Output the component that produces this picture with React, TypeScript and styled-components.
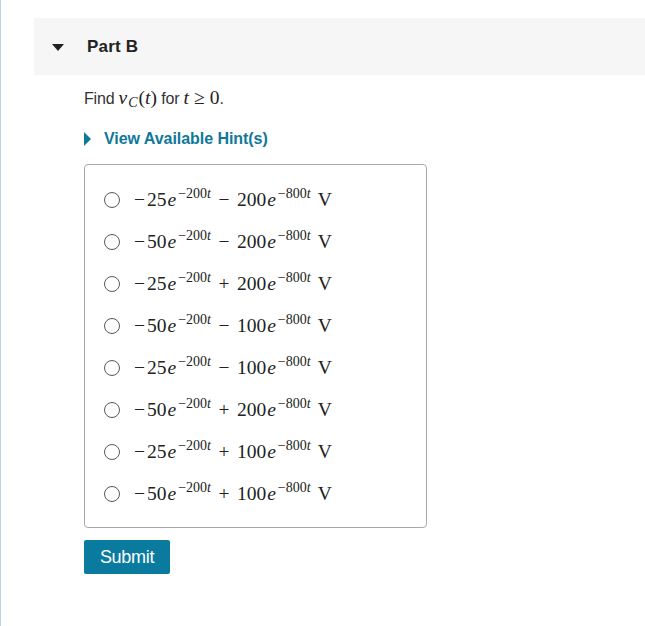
import React from "react";
import styled, { createGlobalStyle } from "styled-components";

const Global = createGlobalStyle`
  html, body { margin: 0; padding: 0; background: #fff; }
  body { font-family: "Liberation Sans", Arial, sans-serif; color: #333; }
`;

const Page = styled.div`
  min-height: 626px;
  box-sizing: border-box;
  border-left: 1px solid #c3cfdd;
  padding: 18px 0 0 33px;
`;

const Header = styled.div`
  height: 57px;
  background: #f6f6f6;
  display: flex;
  align-items: center;
  padding-left: 18px;
  gap: 23px;
`;

const DownTri = styled.span`
  width: 0;
  height: 0;
  border-left: 6px solid transparent;
  border-right: 6px solid transparent;
  border-top: 7px solid #222;
  margin-top: 1px;
`;

const Title = styled.h2`
  margin: 0;
  font-size: 17px;
  font-weight: 700;
  color: #222;
  letter-spacing: 0.2px;
`;

const Body = styled.div`
  padding-left: 50px;
`;

const Prompt = styled.p`
  margin: 13px 0 0;
  font-size: 16px;
  line-height: 20px;
  color: #333;
  letter-spacing: -0.2px;
  white-space: nowrap;
`;

const M = styled.span<{ $i?: boolean; $gap?: number }>`
  font-family: "Liberation Serif", "Times New Roman", serif;
  font-style: ${(p) => (p.$i ? "italic" : "normal")};
  font-size: 19.5px;
  color: #222;
  letter-spacing: 0;
  margin: 0 ${(p) => p.$gap ?? 0}px;
`;

const Sub = styled.span`
  font-family: "Liberation Serif", serif;
  font-style: italic;
  font-size: 14px;
  vertical-align: -3px;
  color: #222;
  margin: 0 1px 0 1px;
  letter-spacing: 0;
`;

const Hint = styled.div`
  margin-top: 16px;
  display: flex;
  align-items: center;
  gap: 13px;
  height: 20px;
  color: #0e7899;
  font-size: 16px;
  font-weight: 700;
  letter-spacing: -0.05px;
`;

const RightTri = styled.span`
  width: 0;
  height: 0;
  border-top: 7px solid transparent;
  border-bottom: 7px solid transparent;
  border-left: 7px solid #0e7899;
`;

const Box = styled.div`
  margin-top: 15px;
  width: 343px;
  box-sizing: border-box;
  border: 1px solid #a9a9a9;
  border-radius: 4px;
  padding: 14px 0 12px 19px;
`;

const Row = styled.label`
  height: 42px;
  display: flex;
  align-items: center;
  gap: 14px;
`;

const Radio = styled.span`
  width: 16px;
  height: 16px;
  box-sizing: border-box;
  border: 1.3px solid #595959;
  border-radius: 50%;
  flex: none;
`;

const Expr = styled.span`
  font-family: "Liberation Serif", "Times New Roman", serif;
  font-size: 19.5px;
  color: #222;
  white-space: nowrap;
  display: inline-flex;
  align-items: baseline;
`;

const Neg = styled.span`
  margin-right: 2px;
`;

const E = styled.span`
  font-style: italic;
  margin: 0 2px 0 1px;
`;

const It = styled.span`
  font-style: italic;
`;

const Sup = styled.span`
  font-size: 14px;
  position: relative;
  top: -8px;
`;

const Op = styled.span`
  display: inline-block;
  width: 26px;
  text-align: center;
`;

const Unit = styled.span`
  margin-left: 7px;
`;

const Submit = styled.button`
  margin-top: 12px;
  width: 86px;
  height: 34px;
  background: #0a7b9f;
  color: #fff;
  border: none;
  border-radius: 2px;
  font-family: "Liberation Sans", Arial, sans-serif;
  font-size: 18px;
  padding: 0;
  letter-spacing: -0.3px;
`;

const options: [string, string, string][] = [
  ["25", "−", "200"],
  ["50", "−", "200"],
  ["25", "+", "200"],
  ["50", "−", "100"],
  ["25", "−", "100"],
  ["50", "+", "200"],
  ["25", "+", "100"],
  ["50", "+", "100"],
];

export default function App() {
  return (
    <>
      <Global />
      <Page>
        <Header>
          <DownTri />
          <Title>Part B</Title>
        </Header>
        <Body>
          <Prompt>
            Find <M $i>v</M>
            <Sub>C</Sub>
            <M>(</M>
            <M $i>t</M>
            <M>)</M> for <M $i>t</M>
            <M $gap={5}>≥</M>
            <M>0</M>.
          </Prompt>
          <Hint>
            <RightTri />
            View Available Hint(s)
          </Hint>
          <Box>
            {options.map(([a, op, b], i) => (
              <Row key={i}>
                <Radio />
                <Expr>
                  <Neg>−</Neg>
                  {a}
                  <E>e</E>
                  <Sup>
                    −200<It>t</It>
                  </Sup>
                  <Op>{op}</Op>
                  {b}
                  <E>e</E>
                  <Sup>
                    −800<It>t</It>
                  </Sup>
                  <Unit>V</Unit>
                </Expr>
              </Row>
            ))}
          </Box>
          <Submit>Submit</Submit>
        </Body>
      </Page>
    </>
  );
}
